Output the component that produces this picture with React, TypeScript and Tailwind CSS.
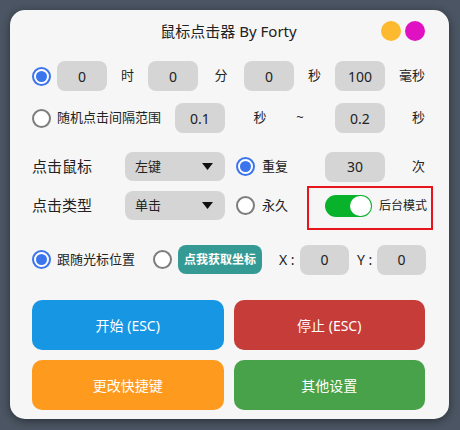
import { ReactNode } from 'react'

const font = { fontFamily: '"Noto Sans", "Noto Sans CJK SC", sans-serif' }

function Radio({ checked }: { checked?: boolean }) {
  return checked ? (
    <div className="w-[19px] h-[19px] shrink-0 rounded-full border-2 border-[#3c74ee] bg-white flex items-center justify-center">
      <div className="w-[11px] h-[11px] rounded-full bg-[#3c74ee]" />
    </div>
  ) : (
    <div className="w-[19px] h-[19px] shrink-0 rounded-full border-2 border-[#7d7d7d] bg-white" />
  )
}

function Box({ value, w = 'w-[50px]' }: { value: string; w?: string }) {
  return (
    <div className={`${w} h-[30px] shrink-0 rounded-lg bg-[#d5d5d5] flex items-center justify-center text-[14px] text-[#222]`}>
      {value}
    </div>
  )
}

function Select({ value }: { value: string }) {
  return (
    <div className="w-[100px] h-[29px] shrink-0 rounded-lg bg-[#d5d5d5] flex items-center justify-between pl-[10px] pr-[12px] text-[13px] text-[#222]">
      <span>{value}</span>
      <svg width="11" height="7" viewBox="0 0 11 7">
        <path d="M0 0 L11 0 L5.5 7 Z" fill="#111" />
      </svg>
    </div>
  )
}

function ActionButton({ color, children }: { color: string; children: ReactNode }) {
  return (
    <div className={`${color} h-[50px] rounded-[10px] flex items-center justify-center text-white text-[14px]`}>
      {children}
    </div>
  )
}

export default function App() {
  return (
    <div className="w-[460px] h-[430px] bg-[#4b5563] p-[10px]" style={font}>
      <div className="w-[439px] h-[409px] bg-[#f6f6f6] rounded-[15px] shadow-[0_2px_8px_rgba(0,0,0,0.45)] flex flex-col text-[#222]">
        {/* Header */}
        <div className="mt-[11px] h-[20px] grid grid-cols-[1fr_auto_1fr] items-center pl-[22px] pr-[24px]">
          <div />
          <div className="text-[15px] leading-[20px] text-[#222]">鼠标点击器 By Forty</div>
          <div className="flex justify-end gap-[4px]">
            <div className="w-[20px] h-[20px] rounded-full bg-[#fdb930]" />
            <div className="w-[20px] h-[20px] rounded-full bg-[#e011c3]" />
          </div>
        </div>

        {/* Fixed interval */}
        <div className="mt-[20px] h-[30px] flex items-center pl-[22px] text-[13px]">
          <Radio checked />
          <div className="ml-[6px]"><Box value="0" /></div>
          <span className="w-[41px] text-center">时</span>
          <Box value="0" />
          <span className="w-[46px] text-center">分</span>
          <Box value="0" />
          <span className="w-[41px] text-center">秒</span>
          <Box value="100" />
          <span className="w-[40px] text-right">毫秒</span>
        </div>

        {/* Random interval */}
        <div className="mt-[12px] h-[30px] flex items-center pl-[22px] text-[13px]">
          <Radio />
          <span className="ml-[6px] w-[118px]">随机点击间隔范围</span>
          <Box value="0.1" />
          <span className="w-[70px] text-center">秒</span>
          <span className="w-[10px] text-center">~</span>
          <span className="w-[30px]" />
          <Box value="0.2" />
          <span className="w-[40px] text-right">秒</span>
        </div>

        {/* Mouse button */}
        <div className="mt-[19px] h-[29px] flex items-center pl-[22px] text-[13px]">
          <span className="w-[93px] text-[15px]">点击鼠标</span>
          <Select value="左键" />
          <div className="ml-[11px]"><Radio checked /></div>
          <span className="ml-[7px] w-[63px]">重复</span>
          <Box value="30" w="w-[60px]" />
          <span className="w-[40px] text-right">次</span>
        </div>

        {/* Click type */}
        <div className="mt-[10px] h-[29px] flex items-center pl-[22px] text-[13px]">
          <span className="w-[93px] text-[15px]">点击类型</span>
          <Select value="单击" />
          <div className="ml-[11px]"><Radio /></div>
          <span className="ml-[7px] w-[45px]">永久</span>
          <div className="relative h-full flex items-center pl-[18px]">
            <div className="absolute left-0 -top-[5px] w-[126px] h-[44px] border-2 border-[#e8141c]" />
            <div className="w-[47px] h-[22px] rounded-full bg-[#08b22a] flex items-center justify-end pr-[1px]">
              <div className="w-[21px] h-[20px] rounded-full bg-white" />
            </div>
            <span className="ml-[7px] text-[12px]">后台模式</span>
          </div>
        </div>

        {/* Position */}
        <div className="mt-[25px] h-[29px] flex items-center pl-[22px] text-[13px]">
          <Radio checked />
          <span className="ml-[6px] w-[96px]">跟随光标位置</span>
          <Radio />
          <div className="ml-[6px] w-[84px] h-[29px] rounded-lg bg-[#369a94] text-white font-bold text-[12px] flex items-center justify-center">
            点我获取坐标
          </div>
          <span className="ml-[17px] w-[21px] text-[14px]">X :</span>
          <Box value="0" w="w-[49px]" />
          <span className="ml-[8px] w-[20px] text-[14px]">Y :</span>
          <Box value="0" w="w-[49px]" />
        </div>

        {/* Actions */}
        <div className="mt-[26px] px-[22px] pr-[24px] grid grid-cols-2 gap-[10px]">
          <ActionButton color="bg-[#1796e3]">开始 (ESC)</ActionButton>
          <ActionButton color="bg-[#c53c38]">停止 (ESC)</ActionButton>
          <ActionButton color="bg-[#fe9a1e]">更改快捷键</ActionButton>
          <ActionButton color="bg-[#48a249]">其他设置</ActionButton>
        </div>
      </div>
    </div>
  )
}
